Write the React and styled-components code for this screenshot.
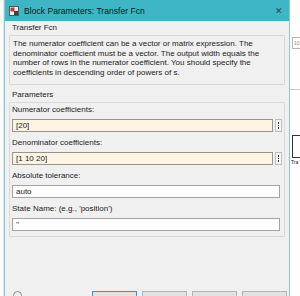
import React from "react";
import styled, { createGlobalStyle } from "styled-components";

const GlobalStyle = createGlobalStyle`
  html, body {
    margin: 0;
    padding: 0;
    background: #fff;
  }
  body {
    width: 300px;
    height: 296px;
    overflow: hidden;
    font-family: "Liberation Sans", Arial, sans-serif;
    font-size: 8px;
    color: #1b1b1b;
  }
  * { box-sizing: border-box; }
`;

const Page = styled.div`
  display: flex;
  width: 300px;
  height: 296px;
  overflow: hidden;
`;

const LeftStrip = styled.div`
  width: 4px;
  flex: none;
  background: #fafafa;
  border-right: 1px solid #e4e4e4;
`;

const Dialog = styled.div`
  width: 286px;
  flex: none;
  height: 296px;
  display: flex;
  flex-direction: column;
  background: #f0f0f0;
  border-left: 1px solid #8cc6d2;
  border-right: 1px solid #8cc6d2;
  box-shadow: 2px 0 2px rgba(90, 110, 130, 0.35);
`;

const TitleBar = styled.div`
  height: 21px;
  flex: none;
  display: flex;
  align-items: center;
  gap: 5px;
  padding: 0 6px 0 4px;
  background: #3eb6c6;
  font-size: 8.6px;
  color: #151515;
`;

const Title = styled.span`
  flex: 1;
`;

const Close = styled.span`
  font-size: 9px;
  color: #2a4a55;
`;

const Body = styled.div`
  flex: 1;
  display: flex;
  flex-direction: column;
  padding: 0 4px;
`;

const SectionLabel = styled.div`
  height: 14px;
  line-height: 14px;
  padding-left: 3px;
  margin-top: ${(p) => p.$top || 0}px;
`;

const Group = styled.div`
  border: 1px solid #dadada;
  border-radius: 1px;
  padding: ${(p) => p.$pad || "3px 3px 6px"};
`;

const Description = styled.p`
  margin: 0;
  line-height: 9.7px;
`;

const Field = styled.div`
  display: flex;
  flex-direction: column;
  margin-bottom: 5px;
`;

const FieldLabel = styled.div`
  height: 12px;
  line-height: 12px;
  margin-bottom: 3px;
`;

const InputRow = styled.div`
  display: flex;
  align-items: center;
  gap: 2px;
  height: 13px;
`;

const Input = styled.div`
  flex: 1;
  height: 13px;
  line-height: 11px;
  padding: 0 3px;
  border: 1px solid ${(p) => (p.$cream ? "#9b9589" : "#a3a3a3")};
  background: ${(p) => (p.$cream ? "#fdf4e3" : "#fff")};
  margin-right: ${(p) => (p.$cream ? 0 : 2)}px;
`;

const DotsButton = styled.div`
  width: 7px;
  height: 13px;
  display: flex;
  flex-direction: column;
  align-items: center;
  justify-content: center;
  gap: 1px;
  border: 1px solid #bdbdbd;
  background: #f7f7f7;
  span {
    width: 1.5px;
    height: 1.5px;
    background: #333;
  }
`;

const Spacer = styled.div`
  flex: 1;
`;

const ButtonBar = styled.div`
  display: flex;
  align-items: flex-start;
  height: 5px;
  padding: 0 0 0 4px;
`;

const HelpIcon = styled.div`
  width: 9px;
  height: 9px;
  border-radius: 50%;
  border: 1px solid #8a8a8a;
`;

const Buttons = styled.div`
  display: flex;
  gap: 5px;
  margin-left: auto;
  margin-right: -2px;
`;

const Button = styled.div`
  width: 45px;
  height: 14px;
  border: 1px solid ${(p) => (p.$primary ? "#3b8fd6" : "#b4b4b4")};
  background: #e2e2e2;
`;

const Canvas = styled.div`
  flex: 1;
  position: relative;
  background: #fff;
`;

const ToolField = styled.div`
  position: absolute;
  left: 2px;
  top: 37px;
  width: 8px;
  height: 12px;
  border: 1px solid #b5b5b5;
  border-right: none;
  font-size: 5px;
  color: #888;
  padding-left: 1px;
  line-height: 10px;
`;

const ToolLine = styled.div`
  position: absolute;
  left: 0;
  right: 0;
  top: 89px;
  border-top: 1px solid #c9c9c9;
`;

const BlockNode = styled.div`
  position: absolute;
  left: 2px;
  top: 135px;
  width: 20px;
  height: 23px;
  border: 1.5px solid #333;
`;

const BlockName = styled.div`
  position: absolute;
  left: 1px;
  top: 159px;
  font-size: 5px;
  color: #222;
`;

const TitleIcon = () => (
  <svg width="10" height="10" viewBox="0 0 10 10">
    <rect x="0.5" y="0.5" width="9" height="9" fill="#f4f4f4" stroke="#555" />
    <rect x="1.5" y="1.5" width="4" height="4" fill="#c0392b" />
    <rect x="5" y="5" width="4" height="4" fill="#444" />
  </svg>
);

const App = () => (
  <>
    <GlobalStyle />
    <Page>
      <LeftStrip />
      <Dialog>
        <TitleBar>
          <TitleIcon />
          <Title>Block Parameters: Transfer Fcn</Title>
          <Close>✕</Close>
        </TitleBar>
        <Body>
          <SectionLabel>Transfer Fcn</SectionLabel>
          <Group>
            <Description>
              The numerator coefficient can be a vector or matrix expression. The
              denominator coefficient must be a vector. The output width equals the
              number of rows in the numerator coefficient. You should specify the
              coefficients in descending order of powers of s.
            </Description>
          </Group>
          <SectionLabel $top={3}>Parameters</SectionLabel>
          <Group $pad="1px 2px 0 2px">
            <Field>
              <FieldLabel>Numerator coefficients:</FieldLabel>
              <InputRow>
                <Input $cream>[20]</Input>
                <DotsButton>
                  <span />
                  <span />
                  <span />
                </DotsButton>
              </InputRow>
            </Field>
            <Field>
              <FieldLabel>Denominator coefficients:</FieldLabel>
              <InputRow>
                <Input $cream>[1 10 20]</Input>
                <DotsButton>
                  <span />
                  <span />
                  <span />
                </DotsButton>
              </InputRow>
            </Field>
            <Field>
              <FieldLabel>Absolute tolerance:</FieldLabel>
              <InputRow>
                <Input>auto</Input>
              </InputRow>
            </Field>
            <Field>
              <FieldLabel>State Name: (e.g., 'position')</FieldLabel>
              <InputRow>
                <Input>''</Input>
              </InputRow>
            </Field>
          </Group>
          <Spacer />
          <ButtonBar>
            <HelpIcon />
            <Buttons>
              <Button $primary />
              <Button />
              <Button />
              <Button />
            </Buttons>
          </ButtonBar>
        </Body>
      </Dialog>
      <Canvas>
        <ToolField>10</ToolField>
        <ToolLine />
        <BlockNode />
        <BlockName>Tra</BlockName>
      </Canvas>
    </Page>
  </>
);

export default App;
